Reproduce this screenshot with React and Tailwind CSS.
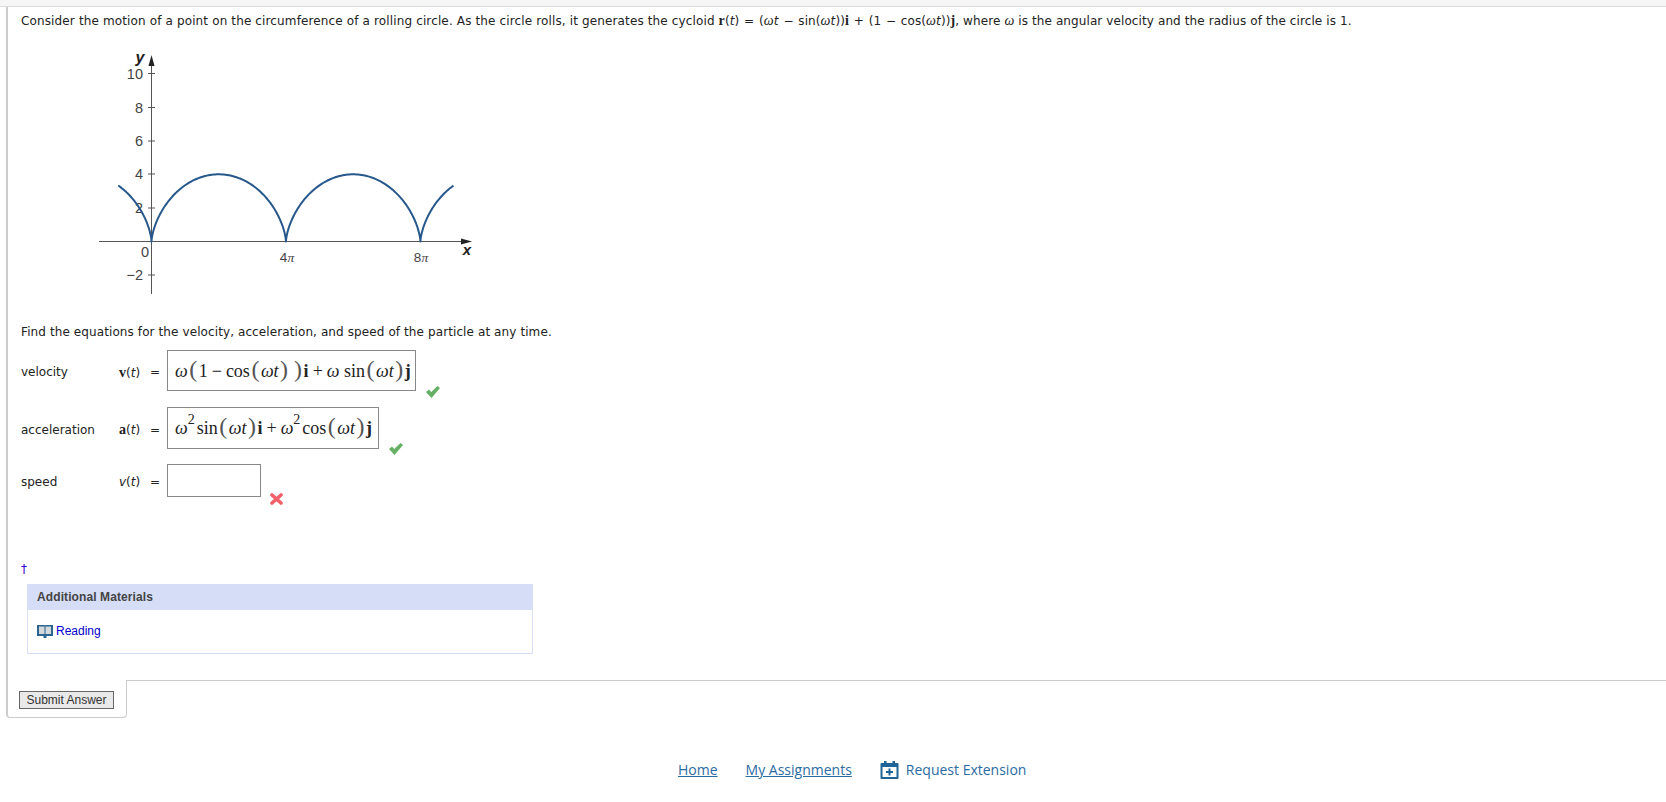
import { useMemo } from 'react';

const Om = () => <i className="font-['Liberation_Serif',serif] text-[14px]">ω</i>;
const Tv = () => <i className="font-['DejaVu_Sans',sans-serif]">t</i>;
const Bold = ({ children }) => <b className="font-['Liberation_Serif',serif] text-[14px]">{children}</b>;
const Sp = ({ children }) => <span className="mx-[0.85px]">{children}</span>;

// Cycloid with circle radius 2, drawn to the graph's own scale
const CycloidGraph = () => {
  const points = useMemo(() => {
    const out = [];
    for (let a = -2.3; a <= 4 * Math.PI + 2.3; a += 0.04) {
      const x = 52.5 + 10.7 * 2 * (a - Math.sin(a));
      const y = 191.5 - 16.8 * 2 * (1 - Math.cos(a));
      out.push(`${x.toFixed(2)},${y.toFixed(2)}`);
    }
    return out.join(' ');
  }, []);
  const ticks = [
    { y: 23.5, label: '10' },
    { y: 57.5, label: '8' },
    { y: 91, label: '6' },
    { y: 124, label: '4' },
    { y: 158, label: '2' },
    { y: 225, label: '−2' },
  ];

  return (
    <svg width="390" height="246" className="block font-['Liberation_Sans',sans-serif]">
      <line x1="52.5" y1="8" x2="52.5" y2="244" stroke="#555" strokeWidth="1" />
      <line x1="0" y1="191.5" x2="368" y2="191.5" stroke="#555" strokeWidth="1" />
      <polygon points="52.5,5 49.5,16 55.5,16" fill="#222" />
      <polygon points="373,191.5 362,188.5 362,194.5" fill="#222" />
      {ticks.map((t) => (
        <g key={t.label}>
          <line x1="49" y1={t.y} x2="56" y2={t.y} stroke="#555" strokeWidth="1" />
          <text x="44" y={t.y + 5} textAnchor="end" fontSize="14.5" fill="#444">{t.label}</text>
        </g>
      ))}
      <polyline points={points} fill="none" stroke="#27588c" strokeWidth="2" strokeLinejoin="round" />
      <text x="50" y="207" textAnchor="end" fontSize="14.5" fill="#444">0</text>
      <text x="188" y="212" textAnchor="middle" fontSize="13.5" fill="#444">4<tspan fontFamily="Liberation Serif" fontStyle="italic">π</tspan></text>
      <text x="322" y="212" textAnchor="middle" fontSize="13.5" fill="#444">8<tspan fontFamily="Liberation Serif" fontStyle="italic">π</tspan></text>
      <text x="41" y="13" textAnchor="middle" fontSize="16" fontWeight="bold" fontStyle="italic" fill="#222">y</text>
      <text x="368" y="205" textAnchor="middle" fontSize="15" fontWeight="bold" fontStyle="italic" fill="#222">x</text>
    </svg>
  );
};

const CheckMark = ({ className }) => (
  <svg width="14" height="12" viewBox="0 0 14 12" className={className}>
    <path d="M0 6 L3 3.5 L5.2 6 L11.5 0 L14 2 L5.5 12 Z" fill="#66b066" />
  </svg>
);

const CrossMark = ({ className }) => (
  <svg width="13" height="12" viewBox="0 0 13 12" className={className}>
    <path d="M2 2 L11 10 M11 2 L2 10" stroke="#f2606a" strokeWidth="3.6" strokeLinecap="round" />
  </svg>
);

const MathText = ({ children }) => (
  <span className="font-['Liberation_Serif',serif] text-[18px] text-[#222] whitespace-nowrap">{children}</span>
);

const W = () => <i>ω</i>;
const T = () => <i>t</i>;
const Paren = ({ children }) => <span className="mx-[1.5px] text-[24px] font-light leading-none text-[#555]">{children}</span>;
const Op = ({ children }) => <span className="mx-[4px]">{children}</span>;
const Sq = () => <sup className="top-[-0.75em] mr-[2px] text-[14px]">2</sup>;

const AnswerRow = ({ label, name, bold, rowClass, boxClass, children, mark }) => (
  <div className={`flex ${rowClass}`}>
    <div className="w-[98px] self-center pt-[3px]">{label}</div>
    <div className="w-[31px] self-center whitespace-nowrap pt-[3px]">
      {bold ? <Bold>{name}</Bold> : <i>{name}</i>}
      (<Tv />)
    </div>
    <div className="w-[17px] self-center pt-[3px]">=</div>
    <div className={`flex items-center border border-[#888] pl-[7px] ${boxClass}`}>{children}</div>
    {mark}
  </div>
);

export default function App() {
  return (
    <div className="min-h-[802px] bg-white text-[12px] text-[#222] font-['DejaVu_Sans',sans-serif]">
      <div className="h-[7px] bg-[#f6f6f6] border-b border-[#dcdcdc]" />

      <div className="ml-[6px] border-l-2 border-[#cccccc] pb-[26px] pl-[13px] pt-[6px]">
        <p className="h-[15px] leading-[15px] tracking-[0.1px] whitespace-nowrap">
          <span className="tracking-[0.135px]">Consider the motion of a point on the circumference of a rolling circle. As the circle rolls, it generates the cycloid </span>
          <Bold>r</Bold>(<Tv />) <Sp>=</Sp> (<Om /><Tv /> <Sp>−</Sp> sin(<Om /><Tv />))<Bold>i</Bold> <Sp>+</Sp> (1 <Sp>−</Sp> cos(<Om /><Tv />))<Bold>j</Bold>, where <Om /> is the angular velocity and the radius of the circle is 1.
        </p>
        <div className="ml-[78px] mt-[22px]">
          <CycloidGraph />
        </div>
        <p className="mt-[29px] h-[15px] leading-[15px] tracking-[0.1px]">Find the equations for the velocity, acceleration, and speed of the particle at any time.</p>

        <AnswerRow
          label="velocity"
          name="v"
          bold
          rowClass="mt-[10px] h-[41px]"
          boxClass="w-[249px]"
          mark={<CheckMark className="ml-[10px] mt-[36px]" />}
        >
          <MathText>
            <W /><Paren>(</Paren>1<Op>−</Op>cos<Paren>(</Paren><W /><T /><Paren>)</Paren><span className="ml-[3px]" /><Paren>)</Paren><b>i</b><Op>+</Op><W /> sin<Paren>(</Paren><W /><T /><Paren>)</Paren><b>j</b>
          </MathText>
        </AnswerRow>

        <AnswerRow
          label="acceleration"
          name="a"
          bold
          rowClass="mt-[16px] h-[42px]"
          boxClass="w-[212px]"
          mark={<CheckMark className="ml-[10px] mt-[36px]" />}
        >
          <MathText>
            <W /><Sq />sin<Paren>(</Paren><W /><T /><Paren>)</Paren><b>i</b><Op>+</Op><W /><Sq />cos<Paren>(</Paren><W /><T /><Paren>)</Paren><b>j</b>
          </MathText>
        </AnswerRow>

        <AnswerRow
          label="speed"
          name="v"
          rowClass="mt-[15px] h-[33px]"
          boxClass="w-[94px]"
          mark={<CrossMark className="ml-[9px] mt-[29px]" />}
        />

        <div className="mt-[64px] h-[16px] leading-[16px] text-[#3300cc]">†</div>

        <div className="ml-[6px] mt-[7px] w-[506px] border border-[#d6ddf6] font-['Liberation_Sans',sans-serif]">
          <div className="h-[25px] leading-[25px] bg-[#d6ddf6] pl-[9px] font-bold tracking-[0.1px] text-[#444]">Additional Materials</div>
          <div className="flex h-[43px] items-start pl-[9px] pt-[14px]">
            <svg width="16" height="14" viewBox="0 0 16 14" className="mr-[3px]">
              <path d="M0 1 H7.5 L8 1.5 L8.5 1 H16 V12 H9.5 V14 H6.5 V12 H0 Z" fill="#2a6592" />
              <path d="M2 2.5 H7.5 V10 H2 Z M8.5 2.5 H14 V10 H8.5 Z" fill="#d3d8da" />
            </svg>
            <a className="leading-[14px] text-[#0000cc]">Reading</a>
          </div>
        </div>
      </div>

      <div className="ml-[6px] flex">
        <div className="h-[38px] w-[121px] shrink-0 rounded-b-[4px] border-b border-l-2 border-r border-[#cccccc]">
          <button className="ml-[11px] mt-[11px] block h-[18px] w-[95px] border border-[#666] bg-[#e9e9e9] font-['Liberation_Sans',sans-serif] text-[12px] leading-[14px] text-[#333]">Submit Answer</button>
        </div>
        <div className="flex-1 border-t border-[#cccccc]" />
      </div>

      <div className="mt-[41px] flex items-center pl-[678px] font-['Open_Sans',sans-serif] text-[14px] text-[#2b6ca3]">
        <a className="underline">Home</a>
        <a className="ml-[28px] underline">My Assignments</a>
        <svg width="19" height="20" viewBox="0 0 19 20" className="ml-[28px]">
          <path d="M1.5 3 H4 V1 H6.5 V3 H12.5 V1 H15 V3 H17.5 A1 1 0 0 1 18.5 4 V18 A1 1 0 0 1 17.5 19 H1.5 A1 1 0 0 1 0.5 18 V4 A1 1 0 0 1 1.5 3 Z" fill="#1f6496" />
          <rect x="2.5" y="7" width="14" height="10" fill="#fff" />
          <path d="M9.5 8.5 V15.5 M6 12 H13" stroke="#1f6496" strokeWidth="2" />
        </svg>
        <span className="ml-[7px]">Request Extension</span>
      </div>
    </div>
  );
}
